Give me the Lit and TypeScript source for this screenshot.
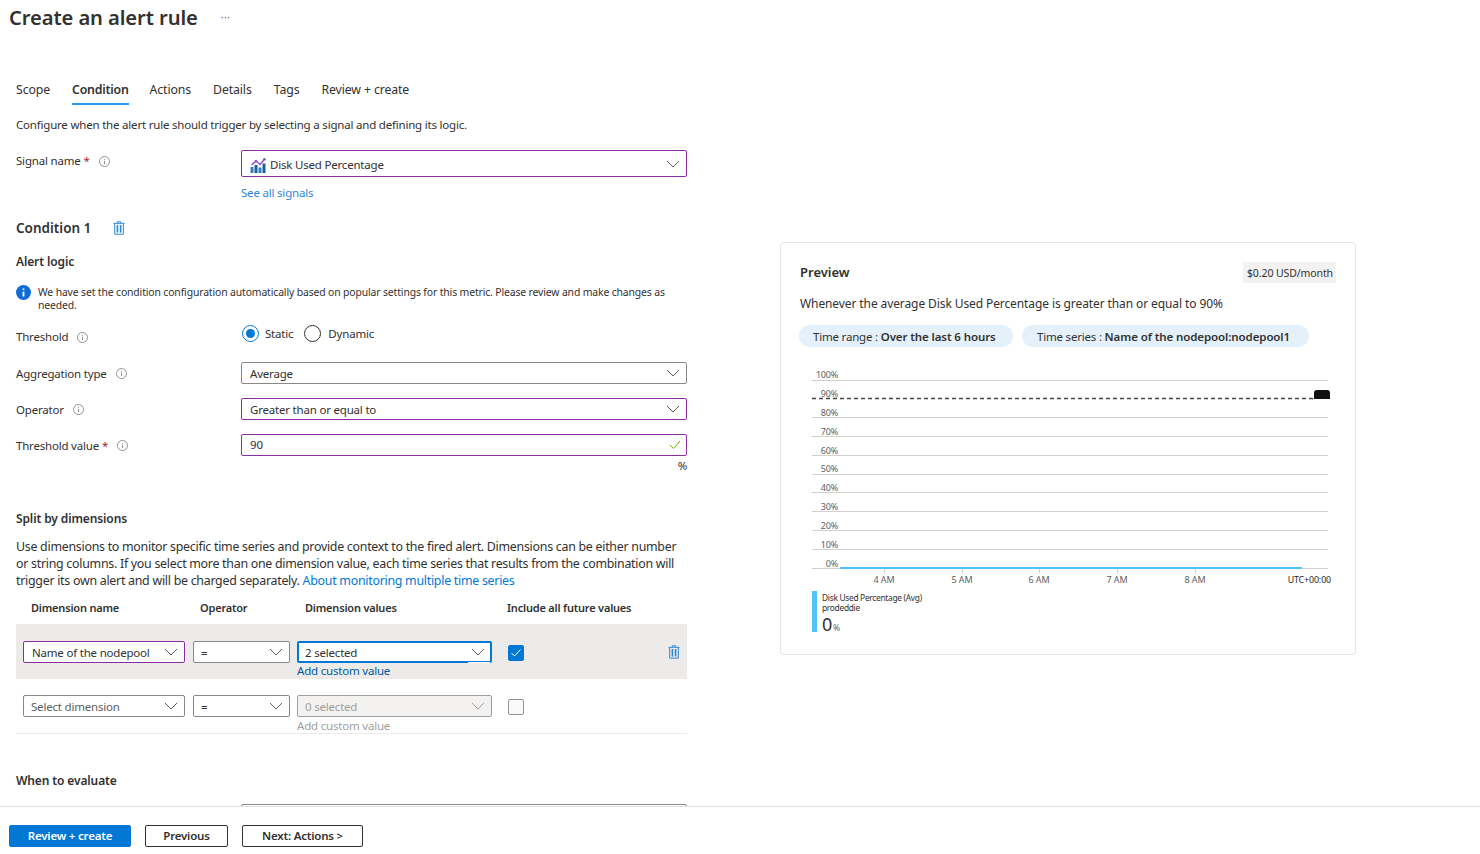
import { LitElement, html, css, svg } from "lit";
import { customElement } from "lit/decorators.js";

const chev = html`<svg class="chev" width="14" height="8" viewBox="0 0 14 8"><path d="M1 1l6 6 6-6" fill="none" stroke="currentColor" stroke-width="1"/></svg>`;
const info = html`<svg class="inf" width="11" height="11" viewBox="0 0 11 11"><circle cx="5.5" cy="5.5" r="5" fill="none" stroke="#8a8886" stroke-width=".9"/><path d="M5.5 4.7v3.4M5.5 2.8v1" stroke="#8a8886" stroke-width=".9"/></svg>`;
const trash = html`<svg width="12" height="14" viewBox="0 0 12 14"><path d="M4.3 2V.8h3.4V2M.5 2.3h11M1.7 2.3v10.9h8.6V2.3" fill="none" stroke="#2b88d8" stroke-width="1"/><rect x="3.6" y="4" width="1.6" height="7.6" fill="#2b88d8"/><rect x="6.8" y="4" width="1.6" height="7.6" fill="#2b88d8"/></svg>`;
const signal = html`<svg width="16" height="15" viewBox="0 0 16 15"><rect x="0.5" y="9" width="3" height="6" fill="#2f7fc1"/><rect x="4.5" y="7" width="3" height="8" fill="#1f5f9e"/><rect x="8.5" y="9.5" width="3" height="5.5" fill="#2f7fc1"/><rect x="12.5" y="5.5" width="3" height="9.5" fill="#1f5f9e"/><path d="M1.5 7L6 3l4 3.5L14.5 1.2" fill="none" stroke="#8a4fd0" stroke-width="1.4"/><circle cx="14.5" cy="1.3" r="1.3" fill="#8a4fd0"/><circle cx="6" cy="3" r="1.2" fill="#8a4fd0"/></svg>`;

const gridLines = [380, 417, 436, 455, 474, 492, 511, 530, 549, 568];
const yLabels: [string, number][] = [["100%", 378], ["90%", 397], ["80%", 416], ["70%", 435], ["60%", 454], ["50%", 472], ["40%", 491], ["30%", 510], ["20%", 529], ["10%", 548], ["0%", 567]];
const xTicks: [string, number][] = [["4 AM", 884], ["5 AM", 962], ["6 AM", 1039], ["7 AM", 1117], ["8 AM", 1195]];

@customElement("app-root")
export class AppRoot extends LitElement {
  static styles = css`
    :host { display: block; width: 1480px; height: 854px; overflow: hidden; background: #fff; color: #323130; font-family: "Noto Sans", "Open Sans", sans-serif; font-size: 11.5px; line-height: 16px; letter-spacing: -0.2px; }
    * { box-sizing: border-box; }
    .main { height: 806px; overflow: hidden; display: flex; align-items: flex-start; }
    .left { width: 687px; flex: none; }
    .title { height: 36px; padding: 0 0 2px 9px; display: flex; align-items: center; font-size: 20.2px; font-weight: 600; letter-spacing: -0.1px; color: #323130; }
    .dots { margin-left: 23px; font-size: 10px; font-weight: 400; color: #605e5c; line-height: 12px; letter-spacing: 0.6px; }
    .tabs { margin: 36px 0 0 16px; display: flex; gap: 22px; height: 33px; font-size: 12.3px; letter-spacing: -0.12px; }
    .tab { height: 33px; padding-top: 10px; }
    .tab.on { font-weight: 600; letter-spacing: -0.2px; border-bottom: 2px solid #2899f5; margin-right: -1px; }
    .body { padding-left: 16px; }
    .desc { margin-top: 12px; height: 16px; white-space: nowrap; }
    .row { display: flex; }
    .lbl { width: 225px; flex: none; display: flex; align-items: center; gap: 5px; white-space: nowrap; }
    .req { color: #a4262c; margin-left: -2px; }
    .inf { margin-left: 4px; flex: none; }
    .sel { position: relative; height: 22px; border: 1px solid #8a8886; border-radius: 2px; background: #fff; display: flex; align-items: center; padding: 1px 8px 0; flex: none; white-space: nowrap; }
    .sel .chev { position: absolute; right: 6px; top: 6px; color: #605e5c; }
    .wide { width: 446px; }
    .p { border-color: #8a2da5; }
    .tall { height: 27px; padding-top: 3px; gap: 4px; }
    .tall .chev { top: 9px; }
    .tv { padding-top: 0; }
    .signal-row { margin-top: 17px; }
    .signal-row .lbl { height: 22px; align-items: center; }
    .link { color: #2b88d8; }
    .see { margin: 8px 0 0 225px; height: 16px; }
    .cond { margin-top: 17px; height: 20px; display: flex; align-items: center; gap: 22px; font-size: 13.5px; font-weight: 600; letter-spacing: 0; }
    .h3 { height: 16px; font-weight: 600; white-space: nowrap; font-size: 12px; letter-spacing: -0.12px; }
    .alert { margin-top: 16px; }
    .info { margin-top: 16px; height: 26px; display: flex; gap: 7px; font-size: 10.4px; line-height: 13px; letter-spacing: -0.13px; }
    .info svg { flex: none; margin-top: -1px; }
    .thr { margin-top: 13px; height: 17px; }
    .thr .lbl { height: 16px; margin-top: 4px; }
    .radios { display: flex; align-items: center; }
    .radio { width: 17px; height: 17px; border-radius: 50%; border: 1px solid #323130; margin: 0 6px 0 1px; flex: none; display: flex; align-items: center; justify-content: center; }
    .radio.on { border-color: #0078d4; }
    .radio.on::before { content: ""; width: 9px; height: 9px; border-radius: 50%; background: #0078d4; }
    .radios span + .radio { margin: 0 7px 0 11px; }
    .m20 { margin-top: 20px; }
    .m14 { margin-top: 14px; }
    .m20 .lbl, .m14 .lbl { padding-top: 1px; }
    .ok { position: absolute; right: 5px; top: 5px; }
    .pct { margin-top: 2px; height: 16px; text-align: right; }
    .split { margin-top: 37px; }
    .para { margin-top: 11px; font-size: 12.4px; line-height: 17px; letter-spacing: -0.27px; width: 671px; white-space: nowrap; }
    .para a { color: #0078d4; }
    .thead { margin-top: 11px; height: 16px; display: grid; grid-template-columns: 169px 105px 202px 1fr; padding-left: 15px; font-weight: 600; font-size: 11px; letter-spacing: -0.2px; white-space: nowrap; }
    .drow { display: flex; align-items: flex-start; padding-left: 7px; height: 55px; }
    .drow.r1 { margin-top: 8px; background: #edebe9; padding-top: 17px; }
    .drow.r2 { padding-top: 16px; border-bottom: 1px solid #edebe9; }
    .w1 { width: 162px; }
    .w2 { width: 97px; margin-left: 8px; padding-left: 7px; }
    .vcol { width: 195px; margin-left: 7px; flex: none; }
    .w3 { width: 195px; }
    .r2 .w1 { padding-left: 7px; }
    .focus { border: 2px solid #0078d4; padding: 1px 6px 0; }
    .focus::after { content: ""; position: absolute; right: 0; bottom: -2px; width: 22px; height: 1px; background: #fff; }
    .focus .chev { right: 5px; top: 5px; }
    .dis { background: #f3f2f1; border-color: #a19f9d; color: #a19f9d; padding-left: 7px; }
    .dis .chev { color: #a19f9d; }
    .ph { color: #605e5c; }
    .add { color: #005a9e; height: 16px; white-space: nowrap; }
    .add.off { color: #a19f9d; }
    .r2 .add { margin-top: 1px; }
    .cb { width: 16px; height: 16px; margin: 4px 0 0 16px; border-radius: 2px; border: 1px solid #979593; flex: none; display: flex; align-items: center; justify-content: center; }
    .cb.on { background: #0078d4; border-color: #0078d4; }
    .cb.off { background: #faf9f8; }
    .tr { margin: 4px 7px 0 auto; }
    .when { margin-top: 39px; }
    .cut { margin: 15px 0 0 225px; }
    .card { width: 576px; margin: 242px 0 0 93px; flex: none; border: 1px solid #e5e5e5; border-radius: 4px; padding: 19px 19px 14px; }
    .chead { display: flex; justify-content: space-between; align-items: center; height: 21px; }
    .ptitle { font-size: 13px; font-weight: 600; letter-spacing: 0; margin-top: -2px; }
    .price { background: #f3f2f1; height: 21px; padding: 0 3px 0 4px; display: flex; align-items: center; font-size: 10.5px; letter-spacing: -0.1px; }
    .when-txt { margin-top: 13px; height: 16px; white-space: nowrap; font-size: 12px; letter-spacing: -0.1px; }
    .chips { margin: 13px 0 0 -1px; display: flex; gap: 9px; }
    .chip { height: 22px; border-radius: 11px; background: #e5f1fa; display: flex; align-items: center; padding: 1px 14px 0; white-space: pre; }
    .chip b { font-weight: 600; letter-spacing: -0.1px; }
    .c1 { width: 214px; }
    .c2 { width: 287px; padding-left: 15px; }
    .chart { display: block; margin: 13px -19px 0; }
    .gl { stroke: #d2d0ce; stroke-width: 1; }
    .dash { stroke: #484644; stroke-width: 1.3; stroke-dasharray: 4 3; }
    .yl { font-size: 9px; fill: #605e5c; text-anchor: end; letter-spacing: -0.2px; }
    .xl { font-size: 9px; fill: #605e5c; text-anchor: middle; letter-spacing: -0.1px; }
    .utc { font-size: 8.8px; fill: #201f1e; text-anchor: end; letter-spacing: -0.1px; }
    .lg { font-size: 8.4px; fill: #323130; letter-spacing: -0.3px; }
    .big { font-size: 18px; fill: #323130; letter-spacing: 0; }
    .unit { font-size: 8.5px; fill: #605e5c; letter-spacing: 0; }
    .foot { height: 48px; border-top: 1px solid #e1dfdd; padding: 18px 0 0 9px; display: flex; }
    .btn { height: 22px; border: 1px solid #323130; border-radius: 2px; display: flex; align-items: center; justify-content: center; font-weight: 600; flex: none; background: #fff; white-space: nowrap; }
    .b1 { width: 122px; background: #0078d4; border-color: #0078d4; color: #fff; }
    .b2 { width: 83px; margin-left: 14px; }
    .b3 { width: 121px; margin-left: 14px; }
  `;

  private chart() {
    return svg`
      ${gridLines.map((y) => svg`<line class="gl" x1="812" x2="1328" y1=${y + 0.5} y2=${y + 0.5}></line>`)}
      ${yLabels.map(([t, y]) => svg`<text class="yl" x="838" y=${y}>${t}</text>`)}
      <line class="dash" x1="812" x2="1316" y1="398.5" y2="398.5"></line>
      <path d="M1314 399v-6q0-3 3-3h10q3 0 3 3v6z" fill="#111"></path>
      ${xTicks.map(([t, x]) => svg`<line class="gl" x1=${x + 0.5} x2=${x + 0.5} y1="568" y2="573"></line><text class="xl" x=${x} y="583">${t}</text>`)}
      <text class="utc" x="1331" y="583">UTC+00:00</text>
      <line x1="840" x2="1302" y1="568" y2="568" stroke="#4fc3f7" stroke-width="2"></line>
      <rect x="812" y="591" width="5" height="41" fill="#4fc3f7"></rect>
      <text class="lg" x="822" y="601">Disk Used Percentage (Avg)</text>
      <text class="lg" x="822" y="611">prodeddie</text>
      <text class="big" x="822" y="631">0</text>
      <text class="unit" x="833" y="631">%</text>`;
  }

  render() {
    return html`
      <div class="main">
        <div class="left">
          <div class="title">Create an alert rule<span class="dots">···</span></div>
          <div class="tabs">
            <div class="tab">Scope</div><div class="tab on">Condition</div><div class="tab">Actions</div><div class="tab">Details</div><div class="tab">Tags</div><div class="tab">Review + create</div>
          </div>
          <div class="body">
            <div class="desc">Configure when the alert rule should trigger by selecting a signal and defining its logic.</div>
            <div class="row signal-row">
              <div class="lbl">Signal name <span class="req">*</span>${info}</div>
              <div class="sel wide p tall">${signal}<span>Disk Used Percentage</span>${chev}</div>
            </div>
            <div class="see link">See all signals</div>
            <div class="cond">Condition 1 ${trash}</div>
            <div class="h3 alert">Alert logic</div>
            <div class="info">
              <svg width="15" height="15" viewBox="0 0 15 15"><circle cx="7.5" cy="7.5" r="7.5" fill="#0f6cd4"/><path d="M7.5 6.5v5M7.5 3.4v1.6" stroke="#fff" stroke-width="1.8"/></svg>
              <div>We have set the condition configuration automatically based on popular settings for this metric. Please review and make changes as<br>needed.</div>
            </div>
            <div class="row thr">
              <div class="lbl">Threshold ${info}</div>
              <div class="radios"><div class="radio on"></div><span>Static</span><div class="radio"></div><span>Dynamic</span></div>
            </div>
            <div class="row m20"><div class="lbl">Aggregation type ${info}</div><div class="sel wide">Average${chev}</div></div>
            <div class="row m14"><div class="lbl">Operator ${info}</div><div class="sel wide p">Greater than or equal to${chev}</div></div>
            <div class="row m14"><div class="lbl">Threshold value <span class="req">*</span>${info}</div>
              <div class="sel wide p tv">90<svg class="ok" width="12" height="10" viewBox="0 0 12 10"><path d="M1 5l3.5 3.5L11 1" fill="none" stroke="#6bb700" stroke-width="1"/></svg></div></div>
            <div class="pct">%</div>
            <div class="h3 split">Split by dimensions</div>
            <div class="para">Use dimensions to monitor specific time series and provide context to the fired alert. Dimensions can be either number<br>or string columns. If you select more than one dimension value, each time series that results from the combination will<br>trigger its own alert and will be charged separately. <a>About monitoring multiple time series</a></div>
            <div class="thead"><span>Dimension name</span><span>Operator</span><span>Dimension values</span><span>Include all future values</span></div>
            <div class="drow r1">
              <div class="sel w1 p">Name of the nodepool${chev}</div>
              <div class="sel w2">=${chev}</div>
              <div class="vcol"><div class="sel w3 focus">2 selected${chev}</div><div class="add">Add custom value</div></div>
              <div class="cb on"><svg width="12" height="10" viewBox="0 0 12 10"><path d="M1.5 5l3 3L10.5 1.5" fill="none" stroke="#fff" stroke-width="1"/></svg></div>
              <div class="tr">${trash}</div>
            </div>
            <div class="drow r2">
              <div class="sel w1"><span class="ph">Select dimension</span>${chev}</div>
              <div class="sel w2">=${chev}</div>
              <div class="vcol"><div class="sel w3 dis">0 selected${chev}</div><div class="add off">Add custom value</div></div>
              <div class="cb off"></div>
            </div>
            <div class="h3 when">When to evaluate</div>
            <div class="sel wide cut"></div>
          </div>
        </div>
        <div class="card">
          <div class="chead"><span class="ptitle">Preview</span><span class="price">$0.20 USD/month</span></div>
          <div class="when-txt">Whenever the average Disk Used Percentage is greater than or equal to 90%</div>
          <div class="chips">
            <div class="chip c1">Time range : <b>Over the last 6 hours</b></div>
            <div class="chip c2">Time series : <b>Name of the nodepool:nodepool1</b></div>
          </div>
          <svg class="chart" width="574" height="280" viewBox="781 360 574 280">${this.chart()}</svg>
        </div>
      </div>
      <div class="foot">
        <div class="btn b1">Review + create</div><div class="btn b2">Previous</div><div class="btn b3">Next: Actions &gt;</div>
      </div>`;
  }
}
